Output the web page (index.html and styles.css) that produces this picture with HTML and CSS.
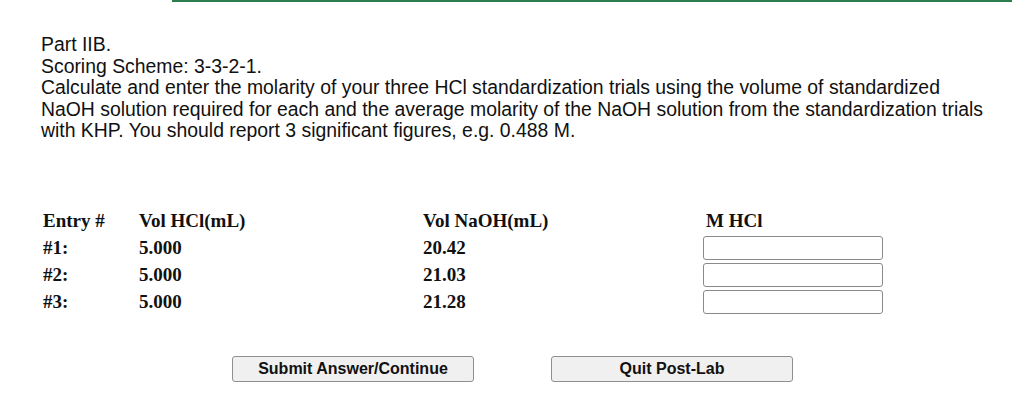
FILE: index.html
```html
<!DOCTYPE html>
<html>
<head>
<meta charset="utf-8">
<link rel="stylesheet" href="styles.css">
</head>
<body>
<div class="topbar"></div>
<div class="intro">
  <div>Part IIB.</div>
  <div>Scoring Scheme: 3-3-2-1.</div>
  <div>Calculate and enter the molarity of your three HCl standardization trials using the volume of standardized NaOH solution required for each and the average molarity of the NaOH solution from the standardization trials with KHP. You should report 3 significant figures, e.g. 0.488 M.</div>
</div>
<div class="grid">
  <div class="h c1">Entry #</div>
  <div class="h c2">Vol HCl(mL)</div>
  <div class="h c3">Vol NaOH(mL)</div>
  <div class="h c4">M HCl</div>

  <div class="c1">#1:</div>
  <div class="c2">5.000</div>
  <div class="c3">20.42</div>
  <div class="c4"><input class="field" type="text"></div>

  <div class="c1">#2:</div>
  <div class="c2">5.000</div>
  <div class="c3">21.03</div>
  <div class="c4"><input class="field" type="text"></div>

  <div class="c1">#3:</div>
  <div class="c2">5.000</div>
  <div class="c3">21.28</div>
  <div class="c4"><input class="field" type="text"></div>
</div>
<div class="buttons">
  <button class="btn">Submit Answer/Continue</button>
  <button class="btn">Quit Post-Lab</button>
</div>
</body>
</html>
```
FILE: styles.css
```css
html, body {
  margin: 0;
  padding: 0;
  background: #ffffff;
}
.topbar {
  margin-left: 172px;
  width: 840px;
  height: 2px;
  background: #2e7d4f;
}
.intro {
  margin-top: 32px;
  padding-left: 41px;
  width: 955px;
  font-family: "Liberation Sans", Arial, sans-serif;
  font-size: 19.4px;
  line-height: 21.6px;
  color: #111;
}
.grid {
  margin-top: 66px;
  margin-left: 43px;
  display: grid;
  grid-template-columns: 96px 284px 280px 180px;
  grid-auto-rows: 27px;
  font-family: "Liberation Serif", "Times New Roman", serif;
  font-weight: bold;
  font-size: 19px;
  color: #111;
  align-items: center;
}
.h.c4 {
  margin-left: 3px;
}
.field {
  box-sizing: border-box;
  width: 180px;
  height: 24px;
  border: 1px solid #8a8a8a;
  border-radius: 3px;
  margin: 0;
  padding: 0;
  display: block;
}
.buttons {
  margin-top: 40px;
  margin-left: 232px;
  display: flex;
  gap: 77px;
}
.btn {
  box-sizing: border-box;
  width: 242px;
  height: 26px;
  background: #f0f0f0;
  border: 1px solid #8f8f8f;
  border-radius: 3px;
  font-family: "Liberation Sans", Arial, sans-serif;
  font-weight: bold;
  font-size: 16px;
  color: #111;
  padding: 0;
}
```
